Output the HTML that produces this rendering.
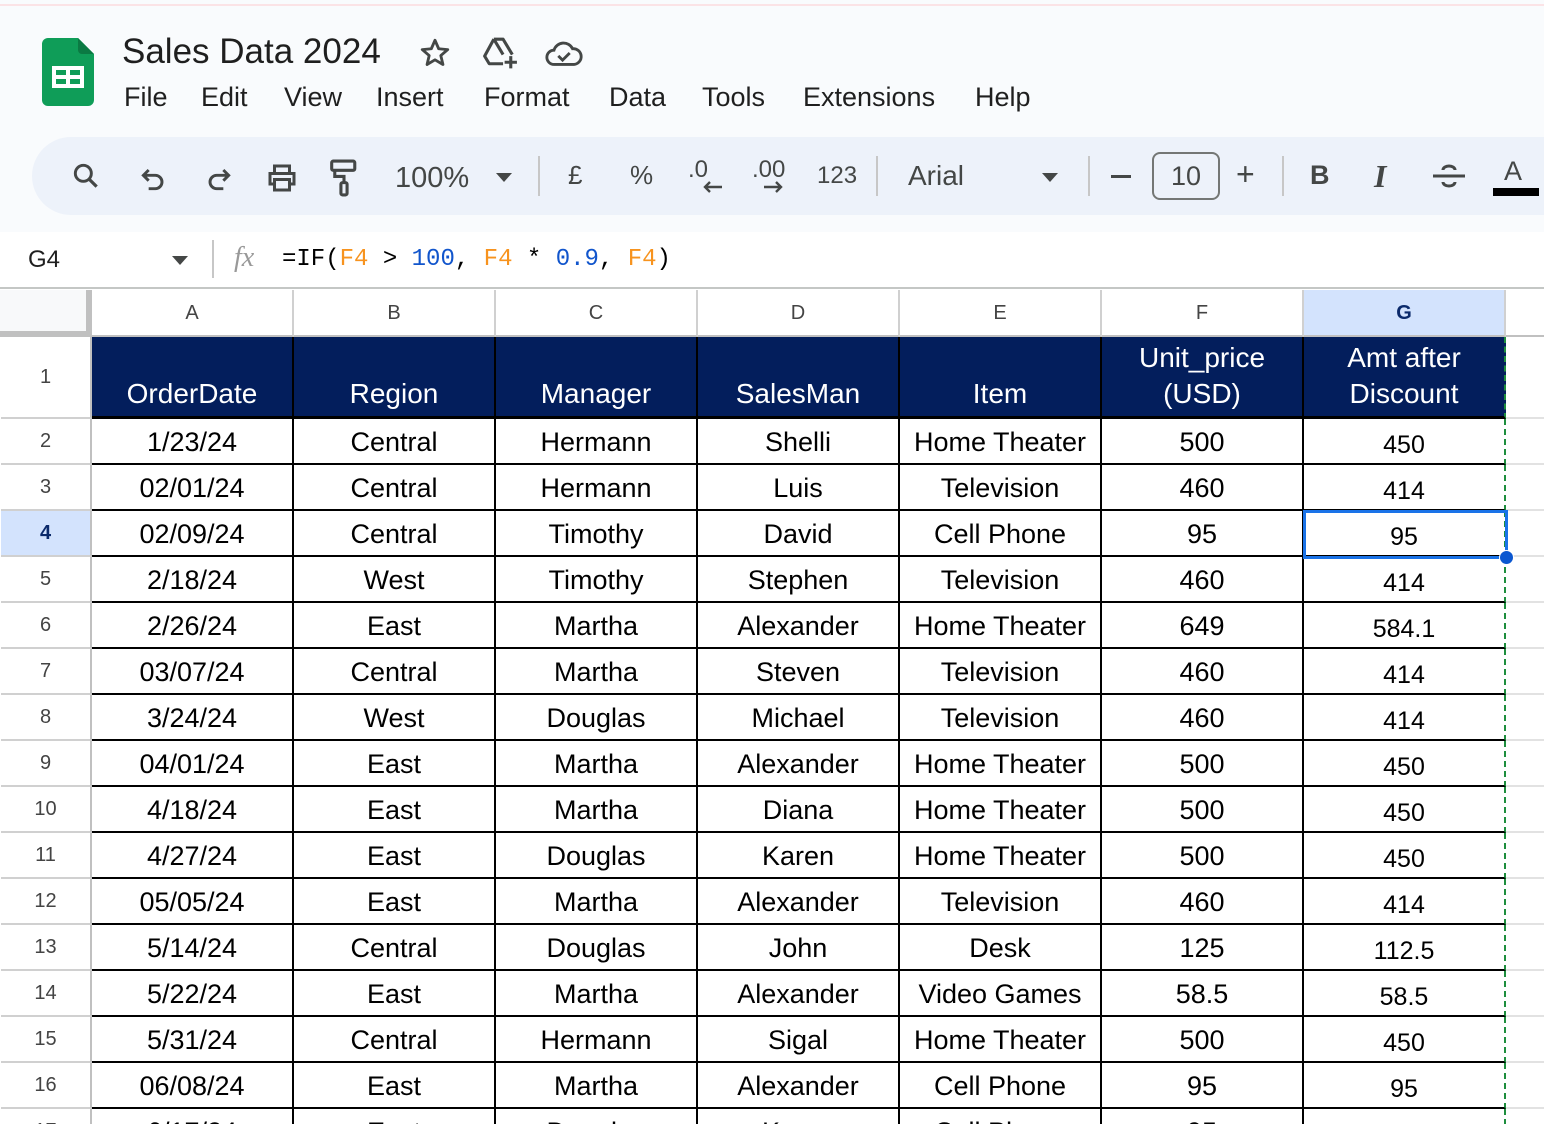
<!DOCTYPE html>
<html><head><meta charset="utf-8">
<style>
*{box-sizing:border-box;margin:0;padding:0}
html{overflow:hidden;width:1544px;height:1124px}
body{width:1544px;height:1124px;background:#fff;font-family:"Liberation Sans",Arial,sans-serif}
#wrap{position:relative;width:1544px;height:1124px;overflow:hidden}
.top{position:absolute;left:0;top:0;width:1544px;height:232px;background:#f9fbfd}
.pink{position:absolute;left:0;top:4px;width:1544px;height:2px;background:#fbe3e6}
.title{position:absolute;left:122px;top:32px;font-size:35px;color:#1f1f1f}
.menu{position:absolute;top:82px;font-size:27px;color:#1f1f1f}
.pill{position:absolute;left:32px;top:137px;width:1560px;height:78px;border-radius:39px;background:#edf2fa}
.tb{position:absolute;color:#444746;font-size:27px}
.sep{position:absolute;top:156px;width:2px;height:40px;background:#c7c7c7}
.fb{position:absolute;left:0;top:232px;width:1544px;height:57px;background:#fff;border-bottom:2px solid #c4c7c5}
.grid{position:absolute;left:1px;top:290px;display:grid;grid-template-columns:91px repeat(7,202px) 39px;grid-template-rows:47px 82px repeat(16,46px)}
.grid>div{display:flex;align-items:center;justify-content:center;overflow:hidden;white-space:nowrap}
.ch{background:#fff;border-right:2px solid #d0d0d0;border-bottom:2px solid #c0c0c0;font-size:20px;color:#444;padding-top:2px}
.corner{background:#f8f9fa;border-right:6px solid #c0c0c0;border-bottom:6px solid #c0c0c0;margin-left:-1px}
.rh{background:#fff;border-right:2px solid #c0c0c0;border-bottom:2px solid #d0d0d0;font-size:20px;color:#444}
.hd{background:#031e5c;color:#fff;font-size:28px;border-right:2px solid #000;border-bottom:3px solid #000;align-items:flex-end!important;text-align:center;line-height:36px;padding-bottom:4px;white-space:normal!important}
.c{font-size:27px;color:#000;border-right:2px solid #000;border-bottom:2px solid #000;padding-top:2px}
.g{font-size:25px;padding-top:8px;border-right:2px dashed #1e8e3e}
.x{border-bottom:2px solid #e2e2e2}
.sel{background:#d3e3fd!important;color:#0b2a6b!important;font-weight:bold}
</style></head><body><div id="wrap">
<div class="top"></div><div class="pink"></div>
<svg style="position:absolute;left:42px;top:38px" width="52" height="68" viewBox="0 0 52 68"><path d="M6 0h30l16 16v46a6 6 0 0 1-6 6H6a6 6 0 0 1-6-6V6a6 6 0 0 1 6-6z" fill="#0f9d58"/><path d="M36 0l16 16H40a4 4 0 0 1-4-4z" fill="#0b7a43"/><rect x="10" y="28" width="32" height="22" fill="#fff"/><rect x="14" y="32" width="10" height="5" fill="#0f9d58"/><rect x="28" y="32" width="10" height="5" fill="#0f9d58"/><rect x="14" y="41" width="10" height="5" fill="#0f9d58"/><rect x="28" y="41" width="10" height="5" fill="#0f9d58"/></svg>
<div class="title">Sales Data 2024</div>
<svg style="position:absolute;left:418px;top:36px" width="34" height="34" viewBox="0 0 24 24"><path d="M12 3l2.6 6 6.4.6-4.9 4.2 1.5 6.3L12 16.8 6.4 20.1l1.5-6.3L3 9.6l6.4-.6z" fill="none" stroke="#444746" stroke-width="2" stroke-linejoin="round"/></svg>
<svg style="position:absolute;left:480px;top:36px" width="40" height="34" viewBox="0 0 26 22"><path d="M9 2h6l6 10M9 2L3 13l3 5h9M9 2l6 10" fill="none" stroke="#444746" stroke-width="2" stroke-linejoin="round"/><path d="M20 13v8M16 17h8" stroke="#444746" stroke-width="2"/></svg>
<svg style="position:absolute;left:544px;top:38px" width="40" height="30" viewBox="0 0 28 20"><path d="M7 18a5 5 0 0 1 0-10 7 7 0 0 1 13-1 5.5 5.5 0 0 1 1 11z" fill="none" stroke="#444746" stroke-width="2"/><path d="M10 12l3 3 5-5" fill="none" stroke="#444746" stroke-width="2"/></svg>
<div class="menu" style="left:124px">File</div><div class="menu" style="left:201px">Edit</div><div class="menu" style="left:284px">View</div><div class="menu" style="left:376px">Insert</div><div class="menu" style="left:484px">Format</div><div class="menu" style="left:609px">Data</div><div class="menu" style="left:702px">Tools</div><div class="menu" style="left:803px">Extensions</div><div class="menu" style="left:975px">Help</div>
<div class="pill"></div>
<svg style="position:absolute;left:70px;top:160px" width="32" height="32" viewBox="0 0 24 24"><circle cx="10" cy="10" r="6" fill="none" stroke="#444746" stroke-width="2.2"/><path d="M14.5 14.5L20 20" stroke="#444746" stroke-width="2.4"/></svg>
<svg style="position:absolute;left:138px;top:162px" width="32" height="32" viewBox="0 0 24 24"><path d="M8 6L4 10l4 4M4 10h9a5 5 0 0 1 0 10H8" fill="none" stroke="#444746" stroke-width="2.2"/></svg>
<svg style="position:absolute;left:202px;top:162px" width="32" height="32" viewBox="0 0 24 24"><path d="M16 6l4 4-4 4M20 10h-9a5 5 0 0 0 0 10h5" fill="none" stroke="#444746" stroke-width="2.2"/></svg>
<svg style="position:absolute;left:264px;top:160px" width="36" height="36" viewBox="0 0 24 24"><path d="M7 8V4h10v4M7 16H4V9h16v7h-3M7 13h10v7H7z" fill="none" stroke="#444746" stroke-width="2"/></svg>
<svg style="position:absolute;left:328px;top:158px" width="32" height="40" viewBox="0 0 20 26"><rect x="2" y="2" width="15" height="6" rx="1" fill="none" stroke="#444746" stroke-width="2"/><path d="M4 8v4h6v4" fill="none" stroke="#444746" stroke-width="2"/><rect x="8" y="16" width="4" height="8" rx="1" fill="none" stroke="#444746" stroke-width="2"/></svg>
<div class="tb" style="left:395px;top:162px;font-size:29px">100%</div>
<svg style="position:absolute;left:494px;top:170px" width="20" height="14"><path d="M2 3h16l-8 9z" fill="#444746"/></svg>
<div class="sep" style="left:538px"></div>
<div class="tb" style="left:568px;top:160px;font-size:26px">£</div>
<div class="tb" style="left:630px;top:160px;font-size:26px">%</div>
<div class="tb" style="left:688px;top:156px;font-size:24px">.0</div>
<svg style="position:absolute;left:702px;top:180px" width="22" height="14" viewBox="0 0 22 14"><path d="M20 7H3M8 2L3 7l5 5" fill="none" stroke="#444746" stroke-width="2.4"/></svg>
<div class="tb" style="left:752px;top:156px;font-size:24px">.00</div>
<svg style="position:absolute;left:762px;top:180px" width="22" height="14" viewBox="0 0 22 14"><path d="M2 7h17M14 2l5 5-5 5" fill="none" stroke="#444746" stroke-width="2.4"/></svg>
<div class="tb" style="left:817px;top:162px;font-size:24px">123</div>
<div class="sep" style="left:876px"></div>
<div class="tb" style="left:908px;top:160px;font-size:28px">Arial</div>
<svg style="position:absolute;left:1040px;top:170px" width="20" height="14"><path d="M2 3h16l-8 9z" fill="#444746"/></svg>
<div class="sep" style="left:1088px"></div>
<div style="position:absolute;left:1111px;top:175px;width:20px;height:3px;background:#444746"></div>
<div style="position:absolute;left:1152px;top:152px;width:68px;height:48px;border:2px solid #747775;border-radius:8px;font-size:27px;color:#444746;text-align:center;line-height:44px">10</div>
<div class="tb" style="left:1236px;top:156px;font-size:32px">+</div>
<div class="sep" style="left:1282px"></div>
<div class="tb" style="left:1310px;top:160px;font-weight:bold">B</div>
<div class="tb" style="left:1374px;top:158px;font-style:italic;font-family:'Liberation Serif',serif;font-weight:bold;font-size:32px">I</div>
<svg style="position:absolute;left:1432px;top:160px" width="34" height="32" viewBox="0 0 34 32"><path d="M23 10a6 4 0 0 0-12 0M11 22a6 4 0 0 0 12 0" fill="none" stroke="#444746" stroke-width="3"/><path d="M1 16h32" stroke="#444746" stroke-width="3"/></svg>
<div class="tb" style="left:1504px;top:156px">A</div><div style="position:absolute;left:1493px;top:188px;width:46px;height:8px;background:#000"></div>
<div class="fb"></div>
<div style="position:absolute;left:28px;top:246px;font-size:24px;color:#1f1f1f">G4</div>
<svg style="position:absolute;left:170px;top:253px" width="20" height="14"><path d="M2 3h16l-8 9z" fill="#444746"/></svg>
<div style="position:absolute;left:212px;top:240px;width:2px;height:38px;background:#c7c7c7"></div>
<div style="position:absolute;left:234px;top:242px;font-size:28px;color:#999;font-style:italic;font-family:'Liberation Serif',serif">fx</div>
<div style="position:absolute;left:282px;top:246px;font-size:24px;font-family:'Liberation Mono',monospace;color:#000">=IF(<span style="color:#f7931e">F4</span> &gt; <span style="color:#1155cc">100</span>, <span style="color:#f7931e">F4</span> * <span style="color:#1155cc">0.9</span>, <span style="color:#f7931e">F4</span>)</div>
<div class="grid">
<div class="corner"></div><div class="ch">A</div><div class="ch">B</div><div class="ch">C</div><div class="ch">D</div><div class="ch">E</div><div class="ch">F</div><div class="ch sel">G</div><div class="ch" style="border-right:none"></div>
<div class="rh">1</div><div class="hd">OrderDate</div><div class="hd">Region</div><div class="hd">Manager</div><div class="hd">SalesMan</div><div class="hd">Item</div><div class="hd">Unit_price<br>(USD)</div><div class="hd" style="border-right:2px dashed #1e8e3e">Amt after<br>Discount</div><div class="x"></div>
<div class="rh">2</div><div class="c">1/23/24</div><div class="c">Central</div><div class="c">Hermann</div><div class="c">Shelli</div><div class="c">Home Theater</div><div class="c">500</div><div class="c g">450</div><div class="x"></div>
<div class="rh">3</div><div class="c">02/01/24</div><div class="c">Central</div><div class="c">Hermann</div><div class="c">Luis</div><div class="c">Television</div><div class="c">460</div><div class="c g">414</div><div class="x"></div>
<div class="rh sel">4</div><div class="c">02/09/24</div><div class="c">Central</div><div class="c">Timothy</div><div class="c">David</div><div class="c">Cell Phone</div><div class="c">95</div><div class="c g">95</div><div class="x"></div>
<div class="rh">5</div><div class="c">2/18/24</div><div class="c">West</div><div class="c">Timothy</div><div class="c">Stephen</div><div class="c">Television</div><div class="c">460</div><div class="c g">414</div><div class="x"></div>
<div class="rh">6</div><div class="c">2/26/24</div><div class="c">East</div><div class="c">Martha</div><div class="c">Alexander</div><div class="c">Home Theater</div><div class="c">649</div><div class="c g">584.1</div><div class="x"></div>
<div class="rh">7</div><div class="c">03/07/24</div><div class="c">Central</div><div class="c">Martha</div><div class="c">Steven</div><div class="c">Television</div><div class="c">460</div><div class="c g">414</div><div class="x"></div>
<div class="rh">8</div><div class="c">3/24/24</div><div class="c">West</div><div class="c">Douglas</div><div class="c">Michael</div><div class="c">Television</div><div class="c">460</div><div class="c g">414</div><div class="x"></div>
<div class="rh">9</div><div class="c">04/01/24</div><div class="c">East</div><div class="c">Martha</div><div class="c">Alexander</div><div class="c">Home Theater</div><div class="c">500</div><div class="c g">450</div><div class="x"></div>
<div class="rh">10</div><div class="c">4/18/24</div><div class="c">East</div><div class="c">Martha</div><div class="c">Diana</div><div class="c">Home Theater</div><div class="c">500</div><div class="c g">450</div><div class="x"></div>
<div class="rh">11</div><div class="c">4/27/24</div><div class="c">East</div><div class="c">Douglas</div><div class="c">Karen</div><div class="c">Home Theater</div><div class="c">500</div><div class="c g">450</div><div class="x"></div>
<div class="rh">12</div><div class="c">05/05/24</div><div class="c">East</div><div class="c">Martha</div><div class="c">Alexander</div><div class="c">Television</div><div class="c">460</div><div class="c g">414</div><div class="x"></div>
<div class="rh">13</div><div class="c">5/14/24</div><div class="c">Central</div><div class="c">Douglas</div><div class="c">John</div><div class="c">Desk</div><div class="c">125</div><div class="c g">112.5</div><div class="x"></div>
<div class="rh">14</div><div class="c">5/22/24</div><div class="c">East</div><div class="c">Martha</div><div class="c">Alexander</div><div class="c">Video Games</div><div class="c">58.5</div><div class="c g">58.5</div><div class="x"></div>
<div class="rh">15</div><div class="c">5/31/24</div><div class="c">Central</div><div class="c">Hermann</div><div class="c">Sigal</div><div class="c">Home Theater</div><div class="c">500</div><div class="c g">450</div><div class="x"></div>
<div class="rh">16</div><div class="c">06/08/24</div><div class="c">East</div><div class="c">Martha</div><div class="c">Alexander</div><div class="c">Cell Phone</div><div class="c">95</div><div class="c g">95</div><div class="x"></div>
<div class="rh">17</div><div class="c">6/17/24</div><div class="c">East</div><div class="c">Douglas</div><div class="c">Karen</div><div class="c">Cell Phone</div><div class="c">95</div><div class="c g">95</div><div class="x"></div>
</div>
<div style="position:absolute;left:1303px;top:510px;width:205px;height:49px;border:3px solid #1a73e8"></div>
<div style="position:absolute;left:1499px;top:550px;width:15px;height:15px;border-radius:50%;background:#0b57d0;border:1px solid #fff"></div>
</div></body></html>
